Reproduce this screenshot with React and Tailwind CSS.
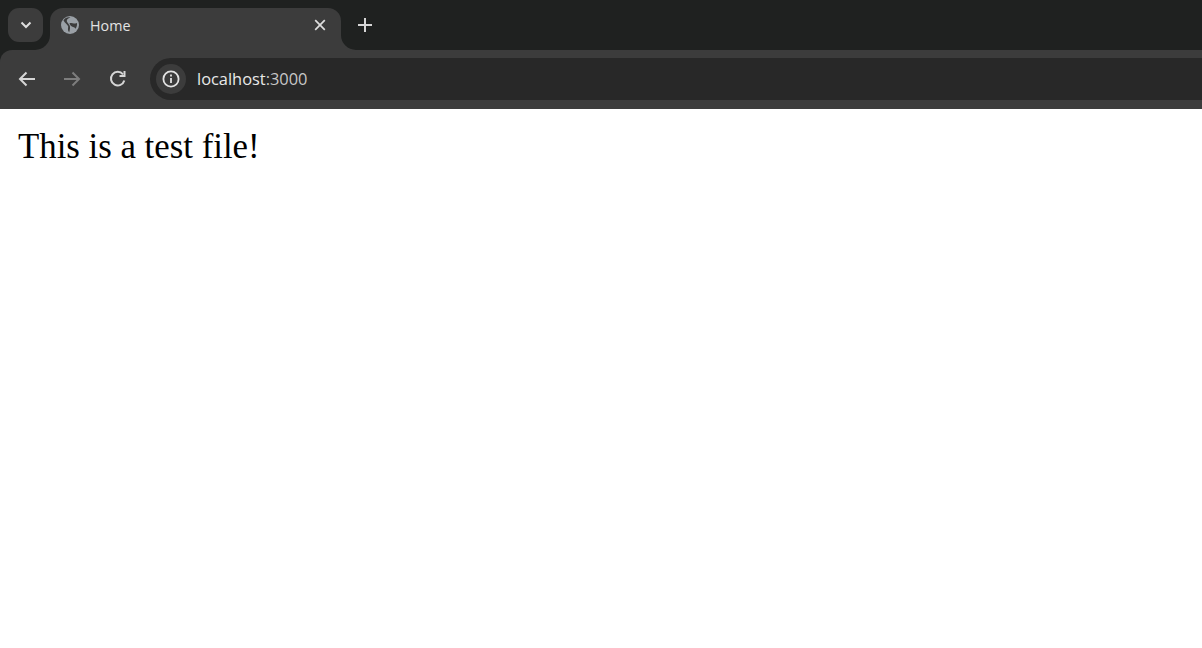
import React from "react";

function TabStrip() {
  return (
    <div className="flex h-[50px] bg-[#3c3c3c]">
      <div className="w-[50px] shrink-0 rounded-br-[15px] bg-[#1f2120] pl-2 pt-2">
        <div className="flex h-[34px] w-[35px] items-center justify-center rounded-[11px] bg-[#3c3c3c]">
          <svg width="12" height="8" viewBox="0 0 12 8" fill="none" stroke="#dedede" strokeWidth="2">
            <path d="M1.500 1.500 6 6l4.500-4.500" />
          </svg>
        </div>
      </div>
      <div className="w-[291px] shrink-0 bg-[#1f2120]">
        <div className="mt-[8px] flex h-[42px] items-center rounded-t-[13px] bg-[#3c3c3c] pb-[8px] pl-[11px] pr-[15px]">
          <svg width="18" height="18" viewBox="0 0 18 18">
            <circle cx="9" cy="9" r="9" fill="#9aa0a6" />
            <path d="M2.500 4.500C4 7 6 8 7 10c.5 1-.2 2.500 0 4 .2 1 .6 1.800 1.200 2.300C9 13.500 9.500 11 8.500 9.300 7.500 7.600 5.500 6 5.800 4.500 6 3 7.500 2 9.500 1.500 6.500.8 4 2 2.500 4.500z" fill="#3c3c3c" />
            <path d="M8.500 7.200c1.500-.6 3-.2 4.500.2 1.200.3 2.300.2 3-.3.300 2-.3 4.200-1.500 5.700-.8-1.600-2.200-1.600-3.500-2.300-1.200-.6-2.200-1.800-2.500-3.300z" fill="#3c3c3c" />
          </svg>
          <span className="ml-[11px] mt-[1px] text-[14.300px] text-[#e3e3e3] [font-family:'Open_Sans',sans-serif]">Home</span>
          <svg className="ml-auto" width="12" height="12" viewBox="0 0 12 12" stroke="#dedede" strokeWidth="1.700">
            <path d="M1.200 1.200 10.800 10.800M10.800 1.200 1.200 10.800" />
          </svg>
        </div>
      </div>
      <div className="flex-1 rounded-bl-[15px] bg-[#1f2120] pl-[17px] pt-[18px]">
        <svg width="14" height="14" viewBox="0 0 14 14" stroke="#d6d6d6" strokeWidth="2">
          <path d="M7 0v14M0 7h14" />
        </svg>
      </div>
    </div>
  );
}

function Toolbar() {
  return (
    <div className="flex h-[59px] items-center rounded-tl-[12px] bg-[#3c3c3c] pb-[2px]">
      <div className="flex w-[150px] shrink-0 items-center pl-[18px]">
        <svg width="18" height="16" viewBox="0 0 18 16" fill="none" stroke="#d6d6d6" strokeWidth="2">
          <path d="M17 8H2M8.500 1.500 2 8l6.500 6.500" />
        </svg>
        <svg className="ml-[27px]" width="18" height="16" viewBox="0 0 18 16" fill="none" stroke="#7d7d7d" strokeWidth="2">
          <path d="M1 8h15M9.500 1.500 16 8l-6.500 6.500" />
        </svg>
        <svg className="ml-[28px]" width="18" height="18" viewBox="0 0 18 18" fill="none" stroke="#d6d6d6" strokeWidth="2">
          <path d="M15.300 10.500A6.800 6.800 0 1 1 14 4.300" />
          <path d="M15.500 1v5h-5" />
        </svg>
      </div>
      <div className="flex h-[42px] flex-1 items-center rounded-l-full bg-[#282828] pl-[6px]">
        <div className="flex h-[30px] w-[30px] items-center justify-center rounded-full bg-[#3c3c3c]">
          <svg width="18" height="18" viewBox="0 0 18 18" fill="none" stroke="#e3e3e3" strokeWidth="1.800">
            <circle cx="9" cy="9" r="7.600" />
            <path d="M9 8v5M9 4.600v1.800" />
          </svg>
        </div>
        <span className="ml-[11px] mt-[1px] text-[16.400px] text-[#c7c7c7] [font-family:'Open_Sans',sans-serif]">
          <span className="text-[#e8e8e8]">localhost</span>:3000
        </span>
      </div>
    </div>
  );
}

export default function App() {
  return (
    <div className="h-[648px] overflow-hidden bg-white">
      <div className="bg-[#1f2120]">
        <TabStrip />
        <Toolbar />
      </div>
      <p className="ml-[18px] mt-[17px] text-[34.800px] leading-[41px] text-black [font-family:'Liberation_Serif',serif]">
        This is a test file!
      </p>
    </div>
  );
}
